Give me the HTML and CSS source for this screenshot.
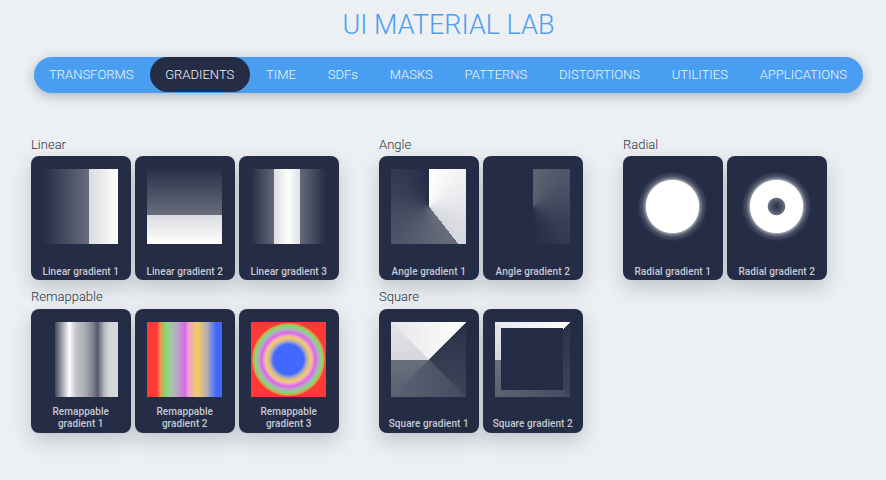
FILE: index.html
```html
<!DOCTYPE html>
<html lang="en">
<head>
<meta charset="utf-8">
<title>UI Material Lab</title>
<link rel="stylesheet" href="styles.css">
</head>
<body>
<header class="top">
  <h1 class="title">UI MATERIAL LAB</h1>
  <nav class="nav">
    <a class="nav-item">TRANSFORMS</a>
    <a class="nav-item active">GRADIENTS</a>
    <a class="nav-item">TIME</a>
    <a class="nav-item">SDFs</a>
    <a class="nav-item">MASKS</a>
    <a class="nav-item">PATTERNS</a>
    <a class="nav-item">DISTORTIONS</a>
    <a class="nav-item">UTILITIES</a>
    <a class="nav-item">APPLICATIONS</a>
  </nav>
</header>
<main class="columns">
  <div class="column">
    <section class="group">
      <h2 class="group-title">Linear</h2>
      <div class="cards">
        <div class="card"><div class="swatch linear-1"></div><p class="card-label">Linear gradient 1</p></div>
        <div class="card"><div class="swatch linear-2"></div><p class="card-label">Linear gradient 2</p></div>
        <div class="card"><div class="swatch linear-3"></div><p class="card-label">Linear gradient 3</p></div>
      </div>
    </section>
    <section class="group">
      <h2 class="group-title">Remappable</h2>
      <div class="cards">
        <div class="card"><div class="swatch remap-1"></div><p class="card-label">Remappable gradient 1</p></div>
        <div class="card"><div class="swatch remap-2"></div><p class="card-label">Remappable gradient 2</p></div>
        <div class="card"><div class="swatch remap-3"></div><p class="card-label">Remappable gradient 3</p></div>
      </div>
    </section>
  </div>
  <div class="column">
    <section class="group">
      <h2 class="group-title">Angle</h2>
      <div class="cards">
        <div class="card"><div class="swatch angle-1"></div><p class="card-label">Angle gradient 1</p></div>
        <div class="card"><div class="swatch angle-2"></div><p class="card-label">Angle gradient 2</p></div>
      </div>
    </section>
    <section class="group">
      <h2 class="group-title">Square</h2>
      <div class="cards">
        <div class="card">
          <svg class="swatch" viewBox="0 0 76 76" shape-rendering="crispEdges">
            <defs>
              <linearGradient id="sq-top" gradientUnits="userSpaceOnUse" x1="0" y1="0" x2="76" y2="0"><stop offset="0" stop-color="#e6e7ea"/><stop offset="1" stop-color="#ffffff"/></linearGradient>
              <linearGradient id="sq-left-a" gradientUnits="userSpaceOnUse" x1="0" y1="0" x2="0" y2="38"><stop offset="0" stop-color="#e4e5e8"/><stop offset="1" stop-color="#d6d7db"/></linearGradient>
              <linearGradient id="sq-left-b" gradientUnits="userSpaceOnUse" x1="0" y1="38" x2="0" y2="76"><stop offset="0" stop-color="#6a6f7e"/><stop offset="1" stop-color="#5a5f71"/></linearGradient>
              <linearGradient id="sq-right" gradientUnits="userSpaceOnUse" x1="0" y1="0" x2="0" y2="76"><stop offset="0" stop-color="#2a3149"/><stop offset="1" stop-color="#3f4559"/></linearGradient>
              <linearGradient id="sq-bottom" gradientUnits="userSpaceOnUse" x1="0" y1="0" x2="76" y2="0"><stop offset="0" stop-color="#5e6374"/><stop offset="1" stop-color="#454b5f"/></linearGradient>
              <symbol id="square-field" viewBox="0 0 76 76">
                <polygon points="0,0 76,0 38,38" fill="url(#sq-top)"/>
                <polygon points="0,0 38,38 0,38" fill="url(#sq-left-a)"/>
                <polygon points="0,38 38,38 0,76" fill="url(#sq-left-b)"/>
                <polygon points="76,0 76,76 38,38" fill="url(#sq-right)"/>
                <polygon points="0,76 38,38 76,76" fill="url(#sq-bottom)"/>
              </symbol>
            </defs>
            <use href="#square-field" width="76" height="76"/>
          </svg>
          <p class="card-label">Square gradient 1</p>
        </div>
        <div class="card">
          <svg class="swatch" viewBox="0 0 76 76" shape-rendering="crispEdges">
            <use href="#square-field" width="76" height="76"/>
            <rect x="6" y="6" width="63" height="63" fill="#252c45"/>
          </svg>
          <p class="card-label">Square gradient 2</p>
        </div>
      </div>
    </section>
  </div>
  <div class="column">
    <section class="group">
      <h2 class="group-title">Radial</h2>
      <div class="cards">
        <div class="card"><div class="swatch radial-1"></div><p class="card-label">Radial gradient 1</p></div>
        <div class="card"><div class="swatch radial-2"></div><p class="card-label">Radial gradient 2</p></div>
      </div>
    </section>
  </div>
</main>
</body>
</html>
```

FILE: styles.css
```css
* { box-sizing: border-box; }

html, body { margin: 0; height: 100%; overflow: hidden; }

body {
  background: #ecf0f3;
  font-family: Roboto, "Liberation Sans", sans-serif;
}

.top {
  padding: 8px 23px 0 34px;
}

.title {
  margin: 0 -23px;
  height: 33px;
  line-height: 35px;
  text-align: center;
  font-size: 27px;
  font-weight: 300;
  color: #4b9ef3;
}

.nav {
  display: flex;
  justify-content: space-between;
  height: 36px;
  margin-top: 16px;
  border-radius: 18px;
  background: #4a9ef2;
  box-shadow: 0 3px 12px rgba(30, 40, 60, .3);
}

.nav-item {
  display: flex;
  align-items: center;
  height: 35px;
  padding: 0 16px 0 15px;
  border-radius: 18px;
  color: #f1f5fb;
  font-size: 13px;
  font-weight: 300;
}

.active {
  background: #252c45;
}

.columns {
  display: flex;
  gap: 40.5px;
  padding: 39px 0 0 31px;
}

.group + .group {
  margin-top: 4.67px;
}

.group-title {
  margin: 0;
  height: 24px;
  padding-top: .6px;
  line-height: 23px;
  font-size: 13px;
  font-weight: 300;
  color: #2c3040;
}

.cards {
  display: flex;
  gap: 4.5px;
}

.card {
  display: flex;
  flex-direction: column;
  align-items: center;
  width: 99.5px;
  height: 124px;
  padding: 13px 6px 2.5px;
  border-radius: 8px;
  background: #252c45;
  box-shadow: 0 8px 20px rgba(37, 44, 69, .22);
}

.card-label {
  margin: auto 0 0;
  text-align: center;
  font-size: 10px;
  line-height: 12px;
  font-weight: 500;
  letter-spacing: .07px;
  color: #c6cad4;
}

.swatch {
  display: block;
  flex: none;
  width: 75.33px;
  height: 75.33px;
}

.linear-1 {
  background: linear-gradient(90deg, #252c45 0, #686d7d 61%, #dadbdf 61%, #ffffff 100%);
}

.linear-2 {
  background: linear-gradient(180deg, #2a3148 0, #686d7d 61%, #dadbdf 61%, #ffffff 100%);
}

.linear-3 {
  background: linear-gradient(90deg, #252c45 0, #646979 30.5%, #dcdde1 30.5%, #ffffff 50%, #dcdde1 66%, #646979 66%, #252c45 100%);
}

.remap-1 {
  background: linear-gradient(90deg,
    #252c45 0, #252c45 16%, #474c60 16.5%, #ffffff 35%, #f0f1f3 37%, #c4c5cb 44%, #a9abb3 56%,
    #7f8391 66%, #555a6b 73%, #7a7e8c 76%, #b8bac1 82%, #d4d5d9 88%, #d8d9dd 100%);
}

.remap-2 {
  background: linear-gradient(90deg,
    #ff3a36 0, #ff3a36 13%, #e0994f 18%, #80dd6e 25%, #a2c9a0 31%, #b8a9c4 40%,
    #dd66e6 51%, #ec9fd6 55%, #f5cc60 67%, #b5adb8 80%, #4169ff 92%, #4169ff 100%);
}

.remap-3 {
  background: radial-gradient(circle at 50% 50%,
    #4169ff 0, #4169ff 15px, #b5adb8 18.5px, #f5cc60 22px, #ec9fd6 24.5px, #dd66e6 26.7px,
    #b8a9c4 30px, #80dd6e 33.3px, #e0994f 35.5px, #ff3a36 37px);
}

.angle-1 {
  background: conic-gradient(from 0deg at 38px 50%, #ffffff 0, #d5d7dc 142deg, #696e7e 142deg, #252c45 360deg);
}

.angle-2 {
  background: conic-gradient(from 0deg at 38px 50%, #5e6374 0, #252c45 180deg, #252c45 360deg);
}

.radial-1 {
  background: radial-gradient(circle at 50% 50%, #ffffff 26.2px, #9fa2ae 27px, #6c7182 28.5px, #474d63 30.5px, #252c45 35px);
}

.radial-2 {
  background: radial-gradient(circle at 50% 50%, #2a3148 0, #4a5065 5px, #6b7081 8.3px, #ffffff 9.2px, #ffffff 26.2px, #9fa2ae 27px, #6c7182 28.5px, #474d63 30.5px, #252c45 35px);
}
```
